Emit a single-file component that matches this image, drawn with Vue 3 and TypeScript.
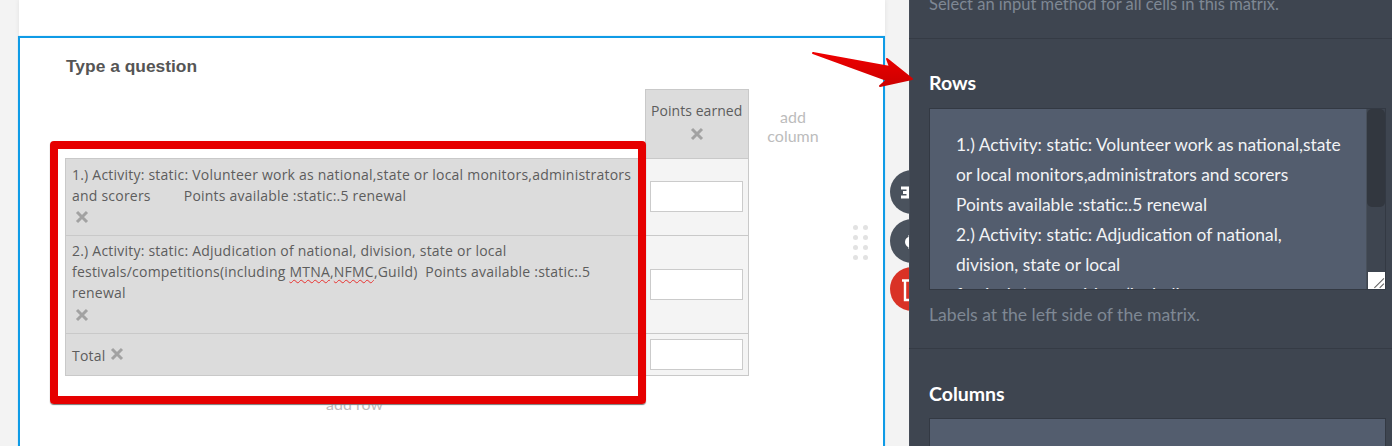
<script setup lang="ts">
const dots: number[] = [1, 2, 3, 4, 5, 6, 7, 8]
const rowLines: string[] = [
  '1.) Activity: static: Volunteer work as national,state',
  'or local monitors,administrators and scorers',
  'Points available :static:.5 renewal',
  '2.) Activity: static: Adjudication of national,',
  'division, state or local',
  'festivals/competitions(including',
]
</script>

<template>
  <div class="page">
    <main class="canvas">
      <div class="card-top"></div>
      <section class="question">
        <h2 class="title">Type a question</h2>
        <div class="matrix-wrap">
          <table class="matrix">
            <tbody>
              <tr>
                <td class="blank"></td>
                <td class="head">
                  <div>Points earned</div>
                  <svg class="x x-head" viewBox="0 0 14 14"><path d="M2 2l10 10M12 2L2 12" /></svg>
                </td>
              </tr>
              <tr class="r1">
                <td class="label">
                  1.) Activity: static: Volunteer work as national,state or local monitors,administrators
                  and scorers<span class="gap"></span>Points available :static:.5 renewal
                  <div class="x-line"><svg class="x" viewBox="0 0 14 14"><path d="M2 2l10 10M12 2L2 12" /></svg></div>
                </td>
                <td class="answer"><span class="input"></span></td>
              </tr>
              <tr class="r2">
                <td class="label">
                  2.) Activity: static: Adjudication of national, division, state or local
                  festivals/competitions(including <span class="sp">MTNA</span>,<span class="sp">NFMC</span>,Guild)&nbsp; Points available :static:.5
                  renewal
                  <div class="x-line"><svg class="x" viewBox="0 0 14 14"><path d="M2 2l10 10M12 2L2 12" /></svg></div>
                </td>
                <td class="answer"><span class="input"></span></td>
              </tr>
              <tr class="r3">
                <td class="label">Total <svg class="x x-inline" viewBox="0 0 14 14"><path d="M2 2l10 10M12 2L2 12" /></svg></td>
                <td class="answer"><span class="input"></span></td>
              </tr>
            </tbody>
          </table>
          <div class="add-col">add column</div>
        </div>
        <div class="add-row">add row</div>
        <div class="drag"><i v-for="d in dots" :key="d"></i></div>
        <div class="highlight"></div>
      </section>
    </main>

    <div class="tools">
      <span class="tool dark">
        <svg viewBox="0 0 44 44"><path d="M11 18h7v9h-7M13 22.5h4" /></svg>
      </span>
      <span class="tool dark">
        <svg viewBox="0 0 44 44"><circle cx="20.500" cy="23" r="5.5" class="fill" /><path d="M20 16v14" /></svg>
      </span>
      <span class="tool red">
        <svg viewBox="0 0 44 44"><path class="thin" d="M12 13.500h12M15 13.500V33H26" /></svg>
      </span>
    </div>

    <aside class="panel">
      <section class="sec sec-top">
        <p class="hint">Select an input method for all cells in this matrix.</p>
      </section>
      <section class="sec sec-rows">
        <h3 class="sec-title">Rows</h3>
        <div class="area">
          <div class="area-text">
            <div v-for="line in rowLines" :key="line" class="area-line">{{ line }}</div>
          </div>
          <div class="track"><div class="thumb"></div></div>
          <svg class="grip" viewBox="0 0 16 16"><path d="M15 6L6 15M15 11l-4 4" /></svg>
        </div>
        <p class="hint hint-rows">Labels at the left side of the matrix.</p>
      </section>
      <section class="sec sec-cols">
        <h3 class="sec-title">Columns</h3>
        <div class="area area-cols"></div>
      </section>
    </aside>

    <svg class="arrow" viewBox="0 0 110 50">
      <defs>
        <linearGradient id="arrowFill" x1="0" y1="0" x2="0" y2="1">
          <stop offset="0" stop-color="#ee0000" />
          <stop offset="1" stop-color="#cc0000" />
        </linearGradient>
      </defs>
      <path d="M3 3 L80 17 L77 9 L102 29 L70 36 L77 30 Z" fill="url(#arrowFill)" stroke="url(#arrowFill)" stroke-width="2" stroke-linejoin="round" />
    </svg>
  </div>
</template>

<style scoped>
.page {
  position: relative;
  display: flex;
  width: 1392px;
  height: 446px;
  overflow: hidden;
  background: #f3f3f3;
  font-family: "Open Sans", "Noto Sans", sans-serif;
}
.canvas {
  width: 909px;
  flex: none;
  padding-left: 18px;
  box-sizing: border-box;
}
.card-top {
  width: 866px;
  height: 36px;
  margin-left: 1px;
  background: #fff;
  box-shadow: 0 0 5px rgba(0, 0, 0, 0.08);
}
.question {
  position: relative;
  box-sizing: border-box;
  width: 867px;
  height: 420px;
  padding: 18px 0 0 45px;
  background: #fff;
  border: 2px solid #0f9be6;
  border-bottom: 0;
  box-shadow: 0 0 1px #8fcdf0;
}
.title {
  margin: 0;
  height: 33px;
  padding-left: 1px;
  font: bold 17.4px/20px "Liberation Sans", Arial, sans-serif;
  color: #555;
}
.matrix-wrap {
  display: flex;
  align-items: flex-start;
}
.matrix {
  width: 684px;
  table-layout: fixed;
  border-collapse: collapse;
  font-size: 14px;
  line-height: 21px;
  color: #5d5d5d;
  letter-spacing: 0.22px;
}
.matrix td {
  padding: 0;
  border: 1px solid #c9c9c9;
}
.matrix td.blank {
  border: 0;
  border-bottom: 1px solid #c9c9c9;
  width: 579px;
}
.matrix td.head {
  height: 58px;
  padding-top: 10px;
  text-align: center;
  vertical-align: top;
  background: #dcdcdc;
  letter-spacing: 0.05px;
}
.matrix td.label {
  background: #dcdcdc;
  padding: 5px 6px 0;
  vertical-align: top;
}
.r1 td.label {
  height: 71px;
}
.r2 td.label {
  height: 93px;
  padding-top: 4px;
}
.r3 td.label {
  height: 30px;
  padding-top: 11px;
}
.matrix td.answer {
  background: #f4f4f4;
  text-align: center;
  vertical-align: middle;
  padding-bottom: 1px;
}
.input {
  display: block;
  width: 91px;
  height: 29px;
  margin: 0 auto;
  background: #fff;
  border: 1px solid #cbcbcb;
}
.gap {
  display: inline-block;
  width: 33px;
}
.x-line {
  height: 21px;
  padding-left: 3px;
}
.r1 .x-line {
  padding-top: 1px;
}
.r2 .x-line {
  padding-top: 2px;
}
.x {
  display: inline-block;
  width: 14px;
  height: 14px;
  vertical-align: -1px;
}
.x path {
  fill: none;
  stroke: #a2a2a2;
  stroke-width: 3;
}
.x-head {
  display: block;
  margin: 6px auto 0;
}
.x-inline {
  vertical-align: 0;
  margin-left: 1px;
}
.sp {
  text-decoration: underline wavy #e8312f 1px;
  text-underline-offset: 2px;
}
.add-col {
  width: 60px;
  flex: none;
  margin-left: 14px;
  padding-top: 18px;
  text-align: center;
  font: 16px/19px Lato, sans-serif;
  color: #bcbcbc;
}
.add-row {
  position: relative;
  width: 58px;
  margin: 18px 0 0 261px;
  font: 16px/20px Lato, sans-serif;
  color: #bcbcbc;
  white-space: nowrap;
}
.drag {
  position: absolute;
  left: 833px;
  top: 187px;
  display: grid;
  grid-template-columns: 5px 5px;
  gap: 5px;
}
.drag i {
  width: 5px;
  height: 5px;
  border-radius: 50%;
  background: #e2e2e2;
}
.highlight {
  position: absolute;
  left: 30px;
  top: 103px;
  width: 596px;
  height: 263px;
  box-sizing: border-box;
  border: 8px solid #e60000;
  border-radius: 4px;
  box-shadow: 0 1px 1px #777;
}
.tools {
  position: absolute;
  left: 890px;
  top: 170px;
  display: flex;
  flex-direction: column;
  gap: 4.5px;
}
.tool {
  display: block;
  width: 44px;
  height: 44px;
  border-radius: 50%;
}
.tool.dark {
  background: #4a525d;
}
.tool.red {
  background: #d93226;
}
.tool svg {
  display: block;
  width: 44px;
  height: 44px;
}
.tool path {
  fill: none;
  stroke: #fff;
  stroke-width: 3;
}
.tool path.thin {
  stroke-width: 2.4;
}
.tool .fill {
  fill: #fff;
}
.panel {
  position: relative;
  flex: 1;
  box-sizing: border-box;
  background: #3e4550;
  box-shadow: inset 1px 0 0 #454c57;
  font-family: Lato, sans-serif;
  overflow: hidden;
}
.sec {
  padding: 0 6px 0 20px;
  box-sizing: border-box;
  border-bottom: 1px solid #353b45;
}
.sec-top {
  display: flow-root;
  height: 39px;
}
.hint {
  margin: 0;
  font-size: 16.5px;
  line-height: 20px;
  color: #7f8894;
}
.sec-top .hint {
  margin-top: -6px;
}
.sec-rows {
  height: 310px;
  padding-top: 32px;
}
.sec-cols {
  height: 120px;
  padding-top: 33px;
  border-bottom: 0;
}
.sec-title {
  margin: 0 0 13px;
  font-size: 19.5px;
  line-height: 23px;
  font-weight: 700;
  color: #fff;
}
.sec-rows .sec-title {
  margin-bottom: 14px;
}
.area {
  position: relative;
  display: flex;
  height: 182px;
  background: #535d6e;
  border: 1px solid #333943;
  box-sizing: border-box;
  overflow: hidden;
}
.area-cols {
  height: 60px;
}
.area-text {
  flex: 1;
  padding: 21px 0 0 26px;
  font-size: 17.4px;
  line-height: 30px;
  color: #f2f3f5;
  overflow: hidden;
}
.area-line {
  white-space: nowrap;
}
.track {
  width: 18px;
  flex: none;
  background: #3e4550;
  border-left: 1px solid #48505b;
}
.thumb {
  height: 98px;
  border-radius: 5px;
  background: #32373f;
}
.grip {
  position: absolute;
  right: 0;
  bottom: 0;
  width: 17px;
  height: 17px;
  background: #fff;
}
.grip path {
  fill: none;
  stroke: #666;
  stroke-width: 1;
}
.hint-rows {
  margin-top: 15px;
  font-size: 17.6px;
}
.arrow {
  position: absolute;
  left: 810px;
  top: 50px;
  width: 110px;
  height: 50px;
}
</style>
